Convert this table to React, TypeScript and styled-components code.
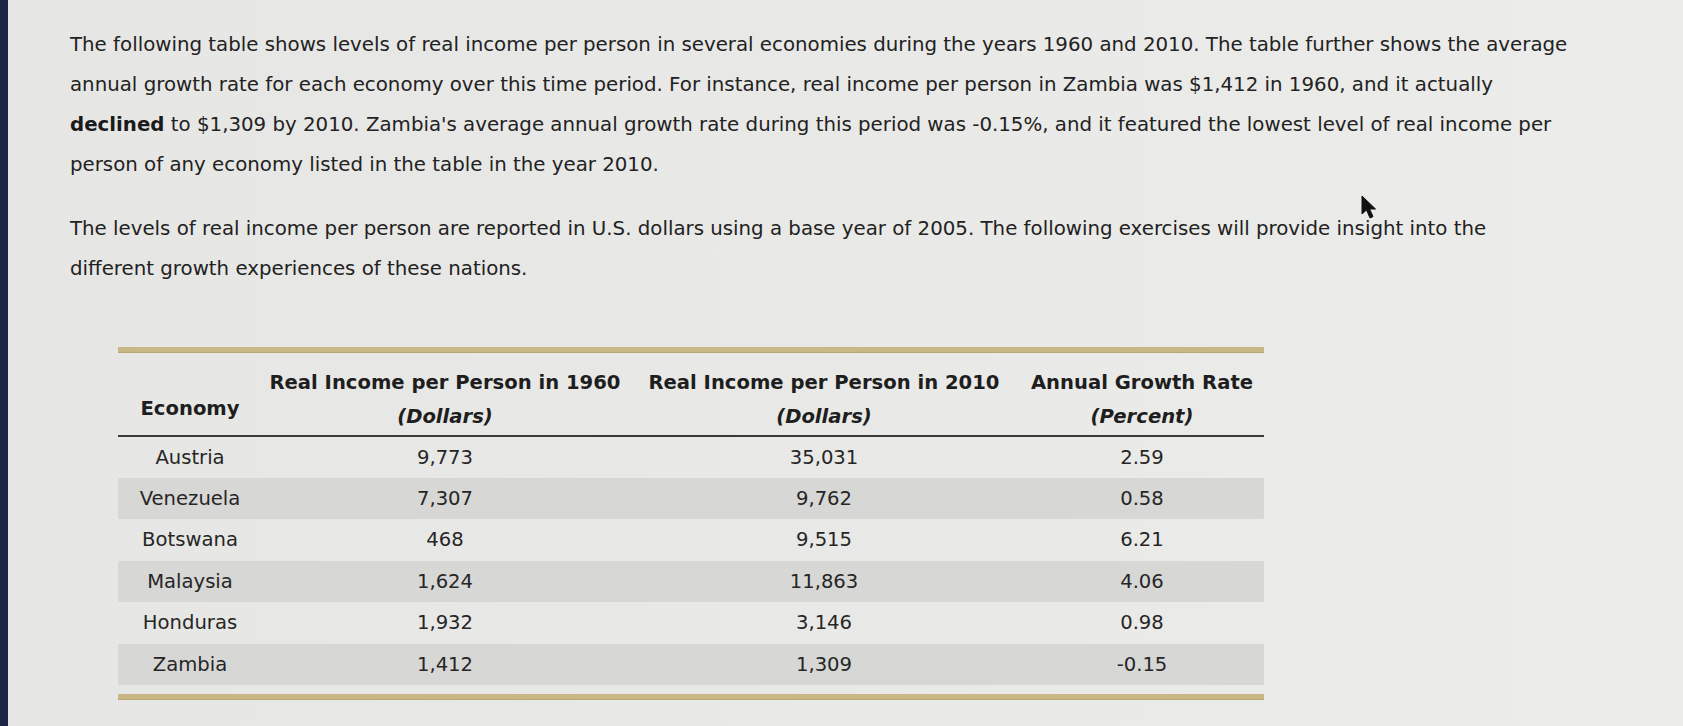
import React from "react";
import styled, { createGlobalStyle } from "styled-components";

const GlobalStyle = createGlobalStyle`
  html, body {
    margin: 0;
    padding: 0;
    background: #e8e8e6;
  }
  body {
    font-family: "DejaVu Sans", Verdana, sans-serif;
    color: #252525;
  }
`;

const Page = styled.div`
  position: relative;
  display: flex;
  width: 1683px;
  height: 726px;
  overflow: hidden;
  background: linear-gradient(90deg, #e6e6e4 0%, #e9e9e7 55%, #ececea 100%);
`;

const LeftBar = styled.div`
  flex: 0 0 8px;
  background: #1d2546;
`;

const Content = styled.main`
  flex: 1;
  padding: 25px 0 0 62px;
`;

const Paragraph = styled.p<{ $gap?: number }>`
  margin: ${(p) => p.$gap ?? 0}px 0 0;
  font-size: 19.8px;
  line-height: 40px;
  white-space: nowrap;
  color: #222;
`;

const Strong = styled.strong`
  font-weight: 700;
  color: #1a1a1a;
`;

const TableWrap = styled.section`
  margin: 58px 0 0 48px;
  width: 1146px;
`;

const GoldRule = styled.div<{ $top?: number }>`
  height: 5px;
  margin-top: ${(p) => p.$top ?? 0}px;
  background: #c9b785;
  border-bottom: 1px solid #b9a673;
`;

const Table = styled.table`
  width: 100%;
  border-collapse: collapse;
  table-layout: fixed;
  font-size: 19.6px;
`;

const HeadCell = styled.th<{ $bottom?: boolean }>`
  padding: ${(p) => (p.$bottom ? "0 0 9px" : "13px 0 1px")};
  vertical-align: bottom;
  text-align: center;
  font-weight: 700;
  line-height: 34px;
  color: #1e1e1e;
  border-bottom: 2px solid #3a3a3a;
  white-space: nowrap;
`;

const Unit = styled.span`
  display: block;
  font-style: italic;
`;

const Row = styled.tr<{ $striped: boolean }>`
  height: 41.5px;
  background: ${(p) => (p.$striped ? "#d7d7d5" : "transparent")};
`;

const Cell = styled.td`
  text-align: center;
  vertical-align: middle;
  padding: 0;
  color: #262626;
`;

const Cursor = styled.svg`
  position: absolute;
  left: 1361px;
  top: 195px;
`;

const rows = [
  ["Austria", "9,773", "35,031", "2.59"],
  ["Venezuela", "7,307", "9,762", "0.58"],
  ["Botswana", "468", "9,515", "6.21"],
  ["Malaysia", "1,624", "11,863", "4.06"],
  ["Honduras", "1,932", "3,146", "0.98"],
  ["Zambia", "1,412", "1,309", "-0.15"],
];

export default function App() {
  return (
    <>
      <GlobalStyle />
      <Page>
        <LeftBar />
        <Content>
          <Paragraph>
            The following table shows levels of real income per person in several economies during the years 1960 and 2010. The table further shows the average
            <br />
            annual growth rate for each economy over this time period. For instance, real income per person in Zambia was $1,412 in 1960, and it actually
            <br />
            <Strong>declined</Strong> to $1,309 by 2010. Zambia's average annual growth rate during this period was -0.15%, and it featured the lowest level of real income per
            <br />
            person of any economy listed in the table in the year 2010.
          </Paragraph>
          <Paragraph $gap={24}>
            The levels of real income per person are reported in U.S. dollars using a base year of 2005. The following exercises will provide insight into the
            <br />
            different growth experiences of these nations.
          </Paragraph>

          <TableWrap>
            <GoldRule />
            <Table>
              <colgroup>
                <col style={{ width: "144px" }} />
                <col style={{ width: "366px" }} />
                <col style={{ width: "392px" }} />
                <col style={{ width: "244px" }} />
              </colgroup>
              <thead>
                <tr>
                  <HeadCell $bottom>Economy</HeadCell>
                  <HeadCell>
                    Real Income per Person in 1960
                    <Unit>(Dollars)</Unit>
                  </HeadCell>
                  <HeadCell>
                    Real Income per Person in 2010
                    <Unit>(Dollars)</Unit>
                  </HeadCell>
                  <HeadCell>
                    Annual Growth Rate
                    <Unit>(Percent)</Unit>
                  </HeadCell>
                </tr>
              </thead>
              <tbody>
                {rows.map((r, i) => (
                  <Row key={r[0]} $striped={i % 2 === 1}>
                    {r.map((v, j) => (
                      <Cell key={j}>{v}</Cell>
                    ))}
                  </Row>
                ))}
              </tbody>
            </Table>
            <GoldRule $top={9} />
          </TableWrap>
        </Content>

        <Cursor width="16" height="26" viewBox="0 0 16 26" aria-hidden="true">
          <path d="M1 1 L1 19 L5.5 15 L9 23 L12 21.6 L8.6 14 L14.5 14 Z" fill="#111" stroke="#111" strokeWidth="1" strokeLinejoin="round" />
        </Cursor>
      </Page>
    </>
  );
}
